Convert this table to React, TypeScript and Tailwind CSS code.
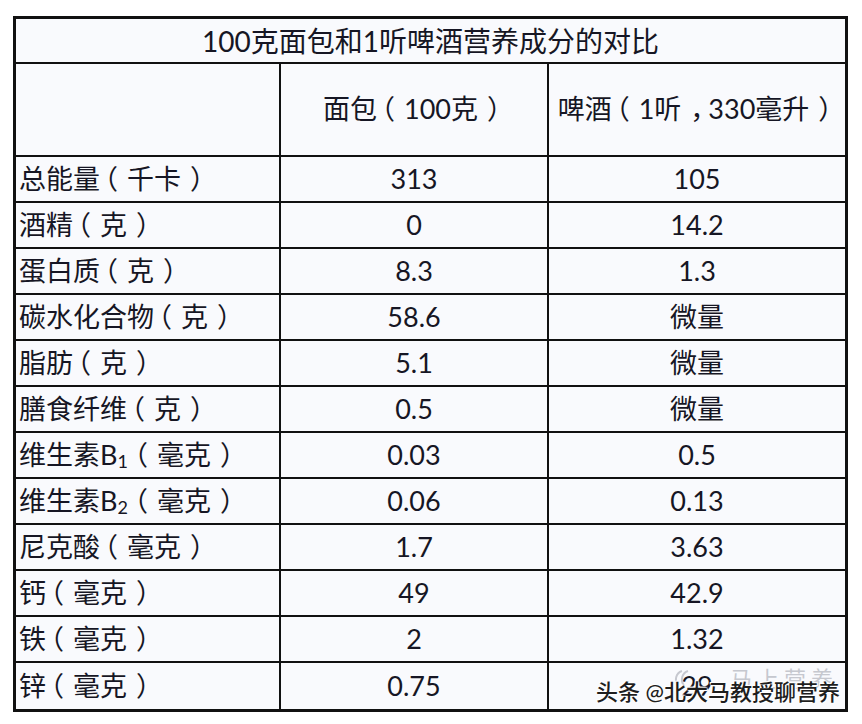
import React from "react"

// full-width punctuation sits centered in its cell in the source; nudge the SC glyphs over
function T({ s }: { s: string }) {
  return (
    <>
      {s.split(/([（），])/).map((p, i) => {
        if (p === "（") return <span key={i} className="relative left-[-9px]">{p}</span>
        if (p === "）" || p === "，") return <span key={i} className="relative left-[9px]">{p}</span>
        return <React.Fragment key={i}>{p}</React.Fragment>
      })}
    </>
  )
}

type Row = {
  name: React.ReactNode
  bread: string
  beer: string
}

const Sub = ({ n }: { n: string }) => (
  <sub className="text-[18px] relative top-[6px] align-baseline mr-[2px]">{n}</sub>
)

const rows: Row[] = [
  { name: <T s="总能量（千卡）" />, bread: "313", beer: "105" },
  { name: <T s="酒精（克）" />, bread: "0", beer: "14.2" },
  { name: <T s="蛋白质（克）" />, bread: "8.3", beer: "1.3" },
  { name: <T s="碳水化合物（克）" />, bread: "58.6", beer: "微量" },
  { name: <T s="脂肪（克）" />, bread: "5.1", beer: "微量" },
  { name: <T s="膳食纤维（克）" />, bread: "0.5", beer: "微量" },
  {
    name: (
      <>
        维生素B<Sub n="1" /><T s="（毫克）" />
      </>
    ),
    bread: "0.03",
    beer: "0.5",
  },
  {
    name: (
      <>
        维生素B<Sub n="2" /><T s="（毫克）" />
      </>
    ),
    bread: "0.06",
    beer: "0.13",
  },
  { name: <T s="尼克酸（毫克）" />, bread: "1.7", beer: "3.63" },
  { name: <T s="钙（毫克）" />, bread: "49", beer: "42.9" },
  { name: <T s="铁（毫克）" />, bread: "2", beer: "1.32" },
  { name: <T s="锌（毫克）" />, bread: "0.75", beer: "29" },
]

export default function App() {
  return (
    <div
      className="relative w-[862px] h-[724px] bg-white pt-[16px] pl-[13px] text-[#161624] text-[27px]"
      style={{ fontFamily: "Lato, 'Noto Sans CJK SC', sans-serif" }}
    >
      <div className="w-[835px] border-[3px] border-[#111] bg-[#f9fafd] grid grid-cols-[265px_268px_1fr]">
        <div className="col-span-3 h-[45px] border-b-2 border-[#111] flex items-center justify-center text-[28px]">
          100克面包和1听啤酒营养成分的对比
        </div>

        <div className="h-[93px] border-b-2 border-r-2 border-[#111]" />
        <div className="h-[93px] border-b-2 border-r-2 border-[#111] flex items-center justify-center whitespace-nowrap">
          <T s="面包（100克）" />
        </div>
        <div className="h-[93px] border-b-2 border-[#111] flex items-center justify-center whitespace-nowrap">
          <T s="啤酒（1听，330毫升）" />
        </div>

        {rows.map((r, i) => {
          const last = i === rows.length - 1
          const b = last ? "" : "border-b-2"
          return (
            <React.Fragment key={i}>
              <div className={`h-[46px] ${b} border-r-2 border-[#111] flex items-center pl-[3px] whitespace-nowrap`}>
                {r.name}
              </div>
              <div className={`h-[46px] ${b} border-r-2 border-[#111] flex items-center justify-center`}>
                {r.bread}
              </div>
              <div className={`h-[46px] ${b} border-[#111] flex items-center justify-center`}>
                {r.beer}
              </div>
            </React.Fragment>
          )
        })}
      </div>

      {/* faint watermark */}
      <div className="absolute left-[672px] top-[662px] flex items-center whitespace-nowrap text-[#c6c8cf] text-[22px]">
        <svg width="30" height="22" viewBox="0 0 30 22" fill="none" stroke="#c6c8cf" strokeWidth="2">
          <path d="M6 18 C2 12 4 5 10 3" />
          <path d="M12 18 C8 12 10 5 16 3" />
        </svg>
        <span className="ml-[28px] tracking-[5px]">马上营养</span>
      </div>

      <div
        className="absolute left-[596px] top-[675px] whitespace-nowrap text-[22px] font-medium text-[#1e1e1e]"
        style={{ textShadow: "0 0 2px #fff, 0 0 2px #fff, 1px 1px 0 #fff, -1px -1px 0 #fff" }}
      >
        头条 @北大马教授聊营养
      </div>
    </div>
  )
}
